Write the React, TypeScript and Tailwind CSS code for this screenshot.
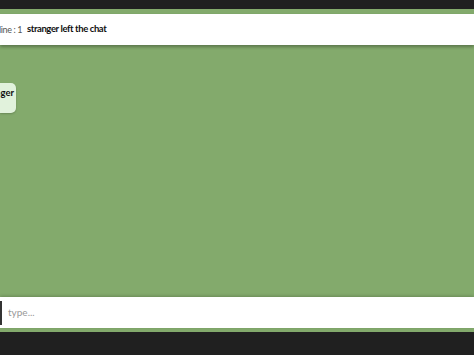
import React from "react";

export default function App() {
  return (
    <div
      className="flex h-[355px] w-[474px] flex-col overflow-hidden bg-[#202020]"
      style={{ fontFamily: "Lato, 'Open Sans', sans-serif" }}
    >
      <div className="h-[9px] shrink-0 bg-[#202020]" />
      <div className="flex flex-1 flex-col bg-[#83aa6c] pt-[5px] pb-[4px]">
        {/* header: online count + status */}
        <div className="flex h-[31px] shrink-0 items-center bg-white shadow-[0_2px_3px_rgba(0,0,0,0.3)]">
          <div className="flex w-[22px] shrink-0 justify-end whitespace-nowrap">
            <span className="text-[9px] tracking-[-0.4px] text-[#555]">Online : 1</span>
          </div>
          <span className="ml-[5px] text-[9.5px] font-bold tracking-[-0.4px] text-[#111]">
            stranger left the chat
          </span>
        </div>

        {/* messages */}
        <div className="flex-1 pt-[38px]">
          <div className="flex h-[30px] w-[16px] justify-end whitespace-nowrap rounded-r-[5px] bg-[#e1f2dc] pt-[3px] pr-[2px] shadow-[0_1px_2px_rgba(0,0,0,0.2)]">
            <span className="text-[9.5px] font-bold text-[#111]">stranger</span>
          </div>
        </div>

        {/* input */}
        <div className="flex h-[31px] shrink-0 items-center bg-white shadow-[0_-1px_3px_rgba(0,0,0,0.2)]">
          <div className="h-[24px] w-[2px] bg-[#333]" />
          <span className="ml-[6px] text-[10px] text-[#999]">type...</span>
        </div>
      </div>
      <div className="h-[23px] shrink-0 bg-[#202020]" />
    </div>
  );
}
